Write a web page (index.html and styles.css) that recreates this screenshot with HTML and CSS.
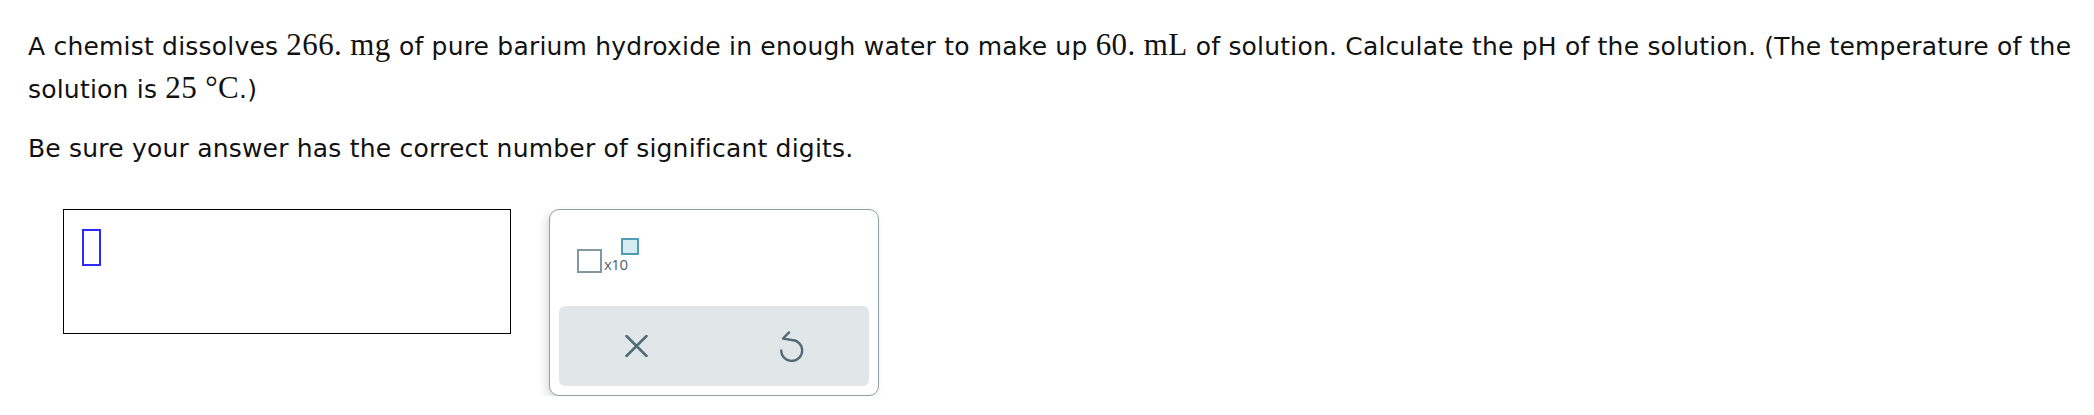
FILE: index.html
```html
<!DOCTYPE html>
<html lang="en">
<head>
<meta charset="utf-8">
<title>Question</title>
<link rel="stylesheet" href="styles.css">
</head>
<body>
<div class="page">
  <p class="q">A chemist dissolves <span class="m">266. mg</span> of pure barium hydroxide in enough water to make up <span class="m">60. mL</span> of solution. Calculate the pH of the solution. (The temperature of the solution is <span class="m">25 °C</span>.)</p>
  <p class="q q2">Be sure your answer has the correct number of significant digits.</p>
  <div class="answer-row">
    <div class="answer-box"><span class="cursor"></span></div>
    <div class="panel">
      <div class="tools">
        <div class="sci">
          <span class="sq-big"></span>
          <span class="x10">x10</span>
          <span class="sq-small"></span>
        </div>
      </div>
      <div class="bar">
        <button class="btn" type="button" aria-label="Clear">
          <svg width="23" height="22" viewBox="0 0 23 22"><path d="M1.5 1 L21.5 21 M21.5 1 L1.5 21" stroke="#4f6b78" stroke-width="2.5" fill="none" stroke-linecap="round"/></svg>
        </button>
        <button class="btn" type="button" aria-label="Undo">
          <svg width="24" height="31" viewBox="0 0 24 31"><path d="M1.2 19.5 A10.5 10.5 0 1 0 11.7 9 L3 7.6 M3 7.6 L9 1.4" stroke="#4f6b78" stroke-width="2.3" fill="none" stroke-linecap="round" stroke-linejoin="round"/></svg>
        </button>
      </div>
    </div>
  </div>
</div>
</body>
</html>
```
FILE: styles.css
```css
html, body {
  margin: 0;
  padding: 0;
  background: #ffffff;
}
.page {
  padding: 25px 16px 0 28px;
  font-family: "DejaVu Sans", Verdana, sans-serif;
  font-size: 25px;
  line-height: 43px;
  letter-spacing: 0.2px;
  color: #111111;
}
.q {
  margin: 0;
}
.q2 {
  margin-top: 16px;
}
.m {
  font-family: "Liberation Serif", "Times New Roman", serif;
  font-size: 31px;
  line-height: 1;
  letter-spacing: 0.4px;
}
.answer-row {
  display: flex;
  align-items: flex-start;
  gap: 38px;
  margin: 39px 0 0 35px;
}
.answer-box {
  box-sizing: border-box;
  width: 448px;
  height: 125px;
  border: 1px solid #000000;
  padding: 19px 0 0 18px;
}
.cursor {
  display: block;
  box-sizing: border-box;
  width: 19px;
  height: 37px;
  border: 2px solid #2b2bff;
}
.panel {
  box-sizing: border-box;
  width: 330px;
  height: 187px;
  border: 1px solid #8c9fa8;
  border-radius: 10px;
  padding: 0 9px 9px 9px;
  background: #ffffff;
  box-shadow: -3px 4px 9px rgba(0, 0, 0, 0.13);
  display: flex;
  flex-direction: column;
}
.tools {
  height: 96px;
  padding: 28px 0 0 18px;
  box-sizing: border-box;
}
.sci {
  display: flex;
  align-items: flex-start;
}
.sq-big {
  box-sizing: border-box;
  width: 25px;
  height: 24px;
  margin-top: 11px;
  border: 2.5px solid #8197a1;
}
.x10 {
  font-family: "Open Sans", sans-serif;
  font-size: 15px;
  line-height: 15px;
  margin-top: 19px;
  margin-left: 2px;
  color: #4d636d;
  letter-spacing: -0.5px;
}
.sq-small {
  box-sizing: border-box;
  width: 18px;
  height: 17px;
  margin-left: -7px;
  border: 2.5px solid #4f9bb8;
  background: #d5ecf3;
}
.bar {
  height: 80px;
  border-radius: 6px;
  background: #e1e6e9;
  display: grid;
  grid-template-columns: 1fr 1fr;
}
.btn {
  border: 0;
  background: transparent;
  padding: 0;
  margin: 0;
  display: flex;
  align-items: center;
  justify-content: center;
  cursor: pointer;
}
.btn svg {
  display: block;
}
```
